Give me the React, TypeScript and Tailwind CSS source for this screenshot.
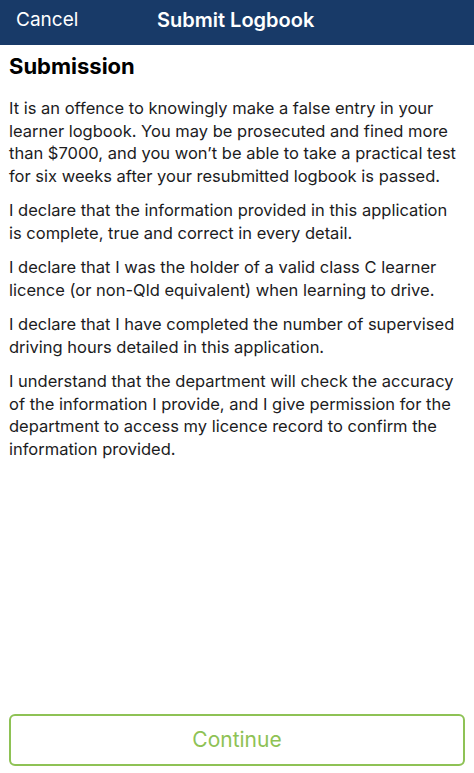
export default function App() {
  const paragraphs = [
    "It is an offence to knowingly make a false entry in your learner logbook. You may be prosecuted and fined more than $7000, and you won\u2019t be able to take a practical test for six weeks after your resubmitted logbook is passed.",
    "I declare that the information provided in this application is complete, true and correct in every detail.",
    "I declare that I was the holder of a valid class C learner licence (or non-Qld equivalent) when learning to drive.",
    "I declare that I have completed the number of supervised driving hours detailed in this application.",
    "I understand that the department will check the accuracy of the information I provide, and I give permission for the department to access my licence record to confirm the information provided.",
  ];

  return (
    <div className="flex h-[773px] w-[474px] flex-col bg-white font-['Inter',sans-serif]">
      <header className="relative flex h-[45px] items-center bg-[#183a68] px-4 pb-[5px]">
        <span className="text-[19px] text-white">Cancel</span>
        <span className="absolute left-[157px] text-[20px] font-semibold text-white">Submit Logbook</span>
      </header>

      <main className="flex-1 pl-[9px] pr-[12px] pt-[5px]">
        <h1 className="mb-[14px] text-[22px] font-bold text-black">Submission</h1>
        <div className="flex flex-col gap-[12px]">
          {paragraphs.map((p, i) => (
            <p key={i} className="text-[16.5px] leading-[22.5px] text-[#1c1c1e]">{p}</p>
          ))}
        </div>
      </main>

      <div className="px-[9px] pb-[7px]">
        <button className="flex h-[52px] w-full items-center justify-center rounded-[6px] border-2 border-[#8ec255] text-[21px] text-[#8ec255]">
          Continue
        </button>
      </div>
    </div>
  );
}
